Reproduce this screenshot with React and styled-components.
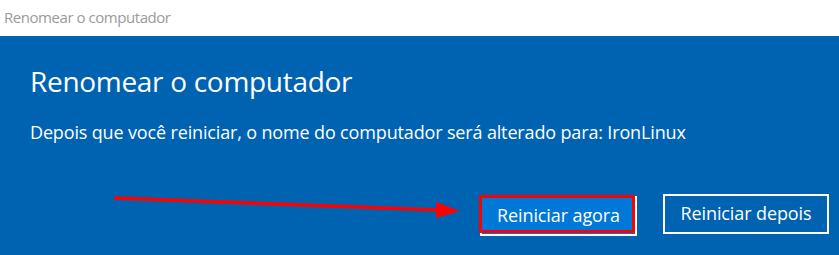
import React from "react";
import styled, { createGlobalStyle } from "styled-components";

const Global = createGlobalStyle`
  html, body { margin: 0; padding: 0; background: #ffffff; }
  body { font-family: "Open Sans", "Noto Sans", sans-serif; }
  * { box-sizing: border-box; }
`;

const Window = styled.div`
  width: 839px;
  height: 255px;
  display: flex;
  flex-direction: column;
  position: relative;
  overflow: hidden;
`;

const TitleBar = styled.div`
  height: 36px;
  flex: none;
  display: flex;
  align-items: center;
  padding: 0 0 3px 4px;
  background: #ffffff;
  color: #9b9b9b;
  font-size: 15px;
  letter-spacing: -0.45px;
`;

const Panel = styled.div`
  flex: 1;
  background: #0063b1;
  color: #ffffff;
  padding: 26px 10px 0 30px;
  display: flex;
  flex-direction: column;
`;

const Heading = styled.h1`
  margin: 0;
  font-weight: 400;
  font-size: 28px;
  line-height: 38px;
  letter-spacing: -0.3px;
`;

const Message = styled.p`
  margin: 20px 0 0;
  font-size: 18px;
  line-height: 24px;
  letter-spacing: -0.15px;
`;

const Actions = styled.div`
  margin-top: 50px;
  display: flex;
  justify-content: flex-end;
  gap: 26px;
`;

const Button = styled.button`
  position: relative;
  height: 40px;
  width: ${(p) => p.$width}px;
  margin-top: ${(p) => (p.$primary ? 2 : 0)}px;
  border: 2px solid #ffffff;
  background: ${(p) => (p.$primary ? "#0078d7" : "#0063b1")};
  color: #ffffff;
  font-family: "Open Sans", "Noto Sans", sans-serif;
  font-size: 18px;
  letter-spacing: -0.1px;
  display: flex;
  align-items: center;
  justify-content: center;
  padding: 0 0 2px;
  cursor: pointer;
`;

const Highlight = styled.span`
  position: absolute;
  left: -3px;
  top: -3px;
  right: 0;
  bottom: 1px;
  border: 3px solid #ff0000;
  pointer-events: none;
`;

const Arrow = styled.svg`
  position: absolute;
  left: 0;
  top: 0;
  pointer-events: none;
`;

export default function App() {
  return (
    <>
      <Global />
      <Window>
        <TitleBar>Renomear o computador</TitleBar>
        <Panel>
          <Heading>Renomear o computador</Heading>
          <Message>
            Depois que você reiniciar, o nome do computador será alterado para: IronLinux
          </Message>
          <Actions>
            <Button $primary $width={157}>
              Reiniciar agora
              <Highlight />
            </Button>
            <Button $width={166}>Reiniciar depois</Button>
          </Actions>
        </Panel>
        <Arrow width="839" height="255" viewBox="0 0 839 255">
          <line x1="114" y1="198" x2="440" y2="210" stroke="#ff0000" strokeWidth="3.5" />
          <polygon points="436,202 460,211 436,218" fill="#ff0000" />
        </Arrow>
      </Window>
    </>
  );
}
